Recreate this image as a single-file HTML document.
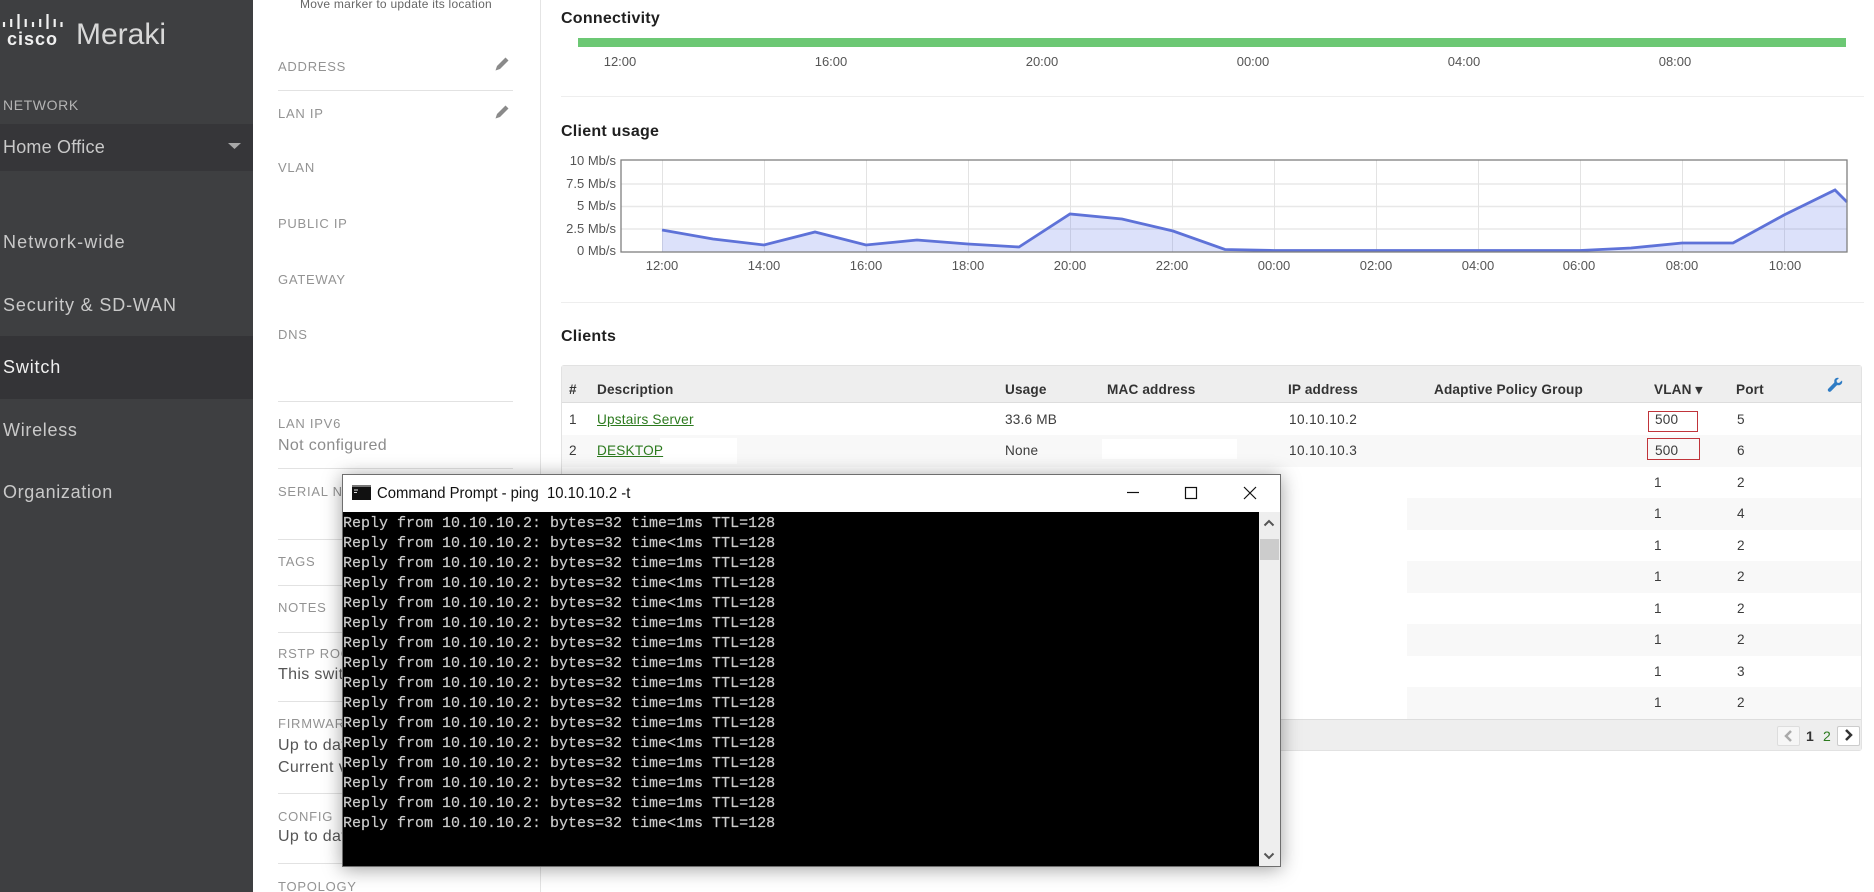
<!DOCTYPE html>
<html><head><meta charset="utf-8"><title>Meraki</title>
<style>
html,body{margin:0;padding:0;background:#fff;width:1874px;height:892px;overflow:hidden}
body{font-family:"Liberation Sans",sans-serif;position:relative}
.a{position:absolute;white-space:pre;line-height:20px}
.nav{left:3px;font-size:18px;letter-spacing:.85px;color:#c9c9c9}
.l{left:278px;font-size:13px;letter-spacing:.75px;color:#939393}
.v{left:278px;font-size:16px;letter-spacing:.35px;color:#7a7a7a}
.h{position:absolute;left:278px;width:235px;height:1px;background:#e2e2e2}
.s{left:561px;font-size:16px;font-weight:bold;color:#1f1f1f;letter-spacing:.25px}
.x{font-size:13px;color:#555;transform:translateX(-50%)}
.th{font-size:13.6px;font-weight:bold;color:#333;top:380px;letter-spacing:.15px}
.td{font-size:13.6px;color:#3c3c3c;letter-spacing:.2px}
.r{position:absolute;left:1407px;width:454px;background:#f8f8f8}
.b{position:absolute;background:#fff}
.g{position:absolute;border:1.5px solid #c0343a;box-sizing:border-box}
</style></head><body>

<!-- sidebar -->
<div style="position:absolute;left:0;top:0;width:253px;height:892px;background:#3e3f41"></div>
<div style="position:absolute;left:0;top:124px;width:253px;height:47px;background:#363639"></div>
<div style="position:absolute;left:0;top:336px;width:253px;height:63px;background:#343437"></div>
<svg style="position:absolute;left:0;top:0" width="70" height="34"><g stroke="#f0f0f0" stroke-width="2.200"><path d="M4 22v5M11.200 19v8M18.500 14v15M25.700 19v8M33 22v5M40.200 19v8M47.500 14v15M54.700 19v8M61.500 22v5"/></g></svg>
<div class="a" style="left:7px;top:29px;font-size:18px;font-weight:bold;letter-spacing:1px;color:#f0f0f0">cisco</div>
<div class="a" style="left:76px;top:18px;font-size:30px;line-height:34px;color:#d8d8d8">Meraki</div>
<div class="a" style="left:3px;top:95px;font-size:14px;letter-spacing:.6px;color:#b4b4b4">NETWORK</div>
<div class="a nav" style="top:137px;letter-spacing:.2px">Home Office</div>
<svg style="position:absolute;left:228px;top:143px" width="13" height="6"><path d="M0 0h13L6.500 6z" fill="#a8a8a8"/></svg>
<div class="a nav" style="top:232px;letter-spacing:1.150px">Network-wide</div>
<div class="a nav" style="top:295px">Security &amp; SD-WAN</div>
<div class="a nav" style="top:357px;color:#f0f0f0">Switch</div>
<div class="a nav" style="top:420px;letter-spacing:.7px">Wireless</div>
<div class="a nav" style="top:482px;letter-spacing:.65px">Organization</div>

<!-- detail column -->
<div style="position:absolute;left:540px;top:0;width:1px;height:892px;background:#e4e4e4"></div>
<div class="a" style="left:300px;top:-6px;font-size:12px;letter-spacing:.25px;color:#666">Move marker to update its location</div>
<div class="a l" style="top:57px">ADDRESS</div>
<svg style="position:absolute;left:495px;top:57px" width="14" height="14"><path d="M10.500 0.500l3 3-8.500 8.500-4.500 1.500 1.500-4.500z" fill="#8a8a8a"/></svg>
<div class="h" style="top:90px"></div>
<div class="a l" style="top:104px">LAN IP</div>
<svg style="position:absolute;left:495px;top:105px" width="14" height="14"><path d="M10.500 0.500l3 3-8.500 8.500-4.500 1.500 1.500-4.500z" fill="#8a8a8a"/></svg>
<div class="a l" style="top:158px">VLAN</div>
<div class="a l" style="top:214px">PUBLIC IP</div>
<div class="a l" style="top:270px">GATEWAY</div>
<div class="a l" style="top:325px">DNS</div>
<div class="h" style="top:401px"></div>
<div class="a l" style="top:414px">LAN IPV6</div>
<div class="a v" style="top:436px;color:#8c8c8c">Not configured</div>
<div class="h" style="top:468px"></div>
<div class="a l" style="top:482px">SERIAL NUMBER</div>
<div class="h" style="top:539px"></div>
<div class="a l" style="top:552px">TAGS</div>
<div class="h" style="top:585px"></div>
<div class="a l" style="top:598px">NOTES</div>
<div class="h" style="top:632px"></div>
<div class="a l" style="top:644px">RSTP ROOT</div>
<div class="a v" style="top:665px;color:#555">This switch</div>
<div class="h" style="top:701px"></div>
<div class="a l" style="top:714px">FIRMWARE</div>
<div class="a v" style="top:736px;color:#555">Up to date</div>
<div class="a v" style="top:758px;color:#555">Current version</div>
<div class="h" style="top:793px"></div>
<div class="a l" style="top:807px">CONFIG</div>
<div class="a v" style="top:827px;color:#555">Up to date</div>
<div class="h" style="top:863px"></div>
<div class="a l" style="top:877px">TOPOLOGY</div>

<!-- connectivity -->
<div class="a s" style="top:9px">Connectivity</div>
<div style="position:absolute;left:578px;top:38px;width:1268px;height:9px;background:#6cc874"></div>
<div class="a x" style="left:620px;top:52px">12:00</div>
<div class="a x" style="left:831px;top:52px">16:00</div>
<div class="a x" style="left:1042px;top:52px">20:00</div>
<div class="a x" style="left:1253px;top:52px">00:00</div>
<div class="a x" style="left:1464px;top:52px">04:00</div>
<div class="a x" style="left:1675px;top:52px">08:00</div>
<div style="position:absolute;left:561px;top:96px;width:1303px;height:1px;background:#eee"></div>

<!-- client usage -->
<div class="a s" style="top:122px">Client usage</div>
<svg style="position:absolute;left:0;top:0" width="1874" height="300">
<g stroke="#e8e8e8" stroke-width="1.500"><path d="M621 184H1847M621 206.500H1847M621 229H1847"/></g>
<g stroke="#e3e3e3" stroke-width="1"><path d="M662.500 160V252M764.500 160V252M866.500 160V252M968.500 160V252M1070.500 160V252M1172.500 160V252M1274.500 160V252M1376.500 160V252M1478.500 160V252M1580.500 160V252M1682.500 160V252M1784.500 160V252"/></g>
<polygon fill="#5f78e6" fill-opacity=".22" points="662,230 713,239 764,245 815,232 866,245 917,240 968,244 1019,247 1070,214 1122,219 1173,231 1225,249.500 1274,250.500 1580,250.500 1631,248 1682,243 1733,243 1784,215 1835,190 1847,202 1847,252 662,252"/>
<polyline fill="none" stroke="#5e72d8" stroke-width="2.800" points="662,230 713,239 764,245 815,232 866,245 917,240 968,244 1019,247 1070,214 1122,219 1173,231 1225,249.500 1274,250.500 1580,250.500 1631,248 1682,243 1733,243 1784,215 1835,190 1847,202"/>
<rect x="621" y="160" width="1226" height="92" fill="none" stroke="#808080" stroke-width="1.300"/>
</svg>
<div class="a" style="left:540px;width:76px;text-align:right;top:151px;font-size:13px;color:#555">10 Mb/s</div>
<div class="a" style="left:540px;width:76px;text-align:right;top:174px;font-size:13px;color:#555">7.5 Mb/s</div>
<div class="a" style="left:540px;width:76px;text-align:right;top:196px;font-size:13px;color:#555">5 Mb/s</div>
<div class="a" style="left:540px;width:76px;text-align:right;top:219px;font-size:13px;color:#555">2.5 Mb/s</div>
<div class="a" style="left:540px;width:76px;text-align:right;top:241px;font-size:13px;color:#555">0 Mb/s</div>
<div class="a x" style="left:662px;top:256px">12:00</div>
<div class="a x" style="left:764px;top:256px">14:00</div>
<div class="a x" style="left:866px;top:256px">16:00</div>
<div class="a x" style="left:968px;top:256px">18:00</div>
<div class="a x" style="left:1070px;top:256px">20:00</div>
<div class="a x" style="left:1172px;top:256px">22:00</div>
<div class="a x" style="left:1274px;top:256px">00:00</div>
<div class="a x" style="left:1376px;top:256px">02:00</div>
<div class="a x" style="left:1478px;top:256px">04:00</div>
<div class="a x" style="left:1579px;top:256px">06:00</div>
<div class="a x" style="left:1682px;top:256px">08:00</div>
<div class="a x" style="left:1785px;top:256px">10:00</div>
<div style="position:absolute;left:561px;top:302px;width:1303px;height:1px;background:#eee"></div>

<!-- clients -->
<div class="a s" style="top:327px">Clients</div>
<div style="position:absolute;left:561px;top:365px;width:1301px;height:386px;box-sizing:border-box;border:1px solid #e2e2e2;border-radius:3px"></div>
<div style="position:absolute;left:562px;top:366px;width:1299px;height:37px;background:#eee;border-bottom:1px solid #ddd;box-sizing:border-box"></div>
<div style="position:absolute;left:562px;top:435px;width:1299px;height:32px;background:#f8f8f8"></div>
<div class="r" style="top:498px;height:32px"></div>
<div class="r" style="top:561px;height:32px"></div>
<div class="r" style="top:624px;height:32px"></div>
<div class="r" style="top:687px;height:32px"></div>
<div style="position:absolute;left:562px;top:719px;width:1299px;height:31px;background:#eee;border-top:1px solid #ddd;box-sizing:border-box"></div>
<div class="b" style="left:660px;top:438px;width:77px;height:26px"></div>
<div class="b" style="left:1102px;top:439px;width:135px;height:20px"></div>

<div class="a th" style="left:569px">#</div>
<div class="a th" style="left:597px">Description</div>
<div class="a th" style="left:1005px">Usage</div>
<div class="a th" style="left:1107px">MAC address</div>
<div class="a th" style="left:1288px">IP address</div>
<div class="a th" style="left:1434px">Adaptive Policy Group</div>
<div class="a th" style="left:1654px">VLAN ▾</div>
<div class="a th" style="left:1736px">Port</div>
<svg style="position:absolute;left:1827px;top:377px" width="16" height="16" viewBox="0 0 16 16"><path d="M15 3.500l-3 2.500-2-.5-.5-2L12 1c-2.500-1-5 .8-4.700 3.500.1.600.1 1-.3 1.400L1.500 11.500c-1 1-.9 2.100-.2 2.800s1.800.8 2.800-.2L9.600 8.500c.4-.4.800-.4 1.400-.3C13.800 8.600 15.900 6 15 3.500z" fill="#2f7cc4"/></svg>

<div class="a td" style="left:569px;top:410px">1</div>
<div class="a td" style="left:597px;top:410px;color:#2c7a1e;text-decoration:underline">Upstairs Server</div>
<div class="a td" style="left:1005px;top:410px">33.6 MB</div>
<div class="a td" style="left:1289px;top:410px;letter-spacing:.4px">10.10.10.2</div>
<div class="a td" style="left:1655px;top:410px">500</div>
<div class="a td" style="left:1737px;top:410px">5</div>
<div class="g" style="left:1648px;top:411px;width:50px;height:21px"></div>

<div class="a td" style="left:569px;top:441px">2</div>
<div class="a td" style="left:597px;top:441px;color:#2c7a1e;text-decoration:underline">DESKTOP</div>
<div class="a td" style="left:1005px;top:441px">None</div>
<div class="a td" style="left:1289px;top:441px;letter-spacing:.4px">10.10.10.3</div>
<div class="a td" style="left:1655px;top:441px">500</div>
<div class="a td" style="left:1737px;top:441px">6</div>
<div class="g" style="left:1647px;top:438px;width:53px;height:22px"></div>

<div class="a td" style="left:1654px;top:473px">1</div><div class="a td" style="left:1737px;top:473px">2</div>
<div class="a td" style="left:1654px;top:504px">1</div><div class="a td" style="left:1737px;top:504px">4</div>
<div class="a td" style="left:1654px;top:536px">1</div><div class="a td" style="left:1737px;top:536px">2</div>
<div class="a td" style="left:1654px;top:567px">1</div><div class="a td" style="left:1737px;top:567px">2</div>
<div class="a td" style="left:1654px;top:599px">1</div><div class="a td" style="left:1737px;top:599px">2</div>
<div class="a td" style="left:1654px;top:630px">1</div><div class="a td" style="left:1737px;top:630px">2</div>
<div class="a td" style="left:1654px;top:662px">1</div><div class="a td" style="left:1737px;top:662px">3</div>
<div class="a td" style="left:1654px;top:693px">1</div><div class="a td" style="left:1737px;top:693px">2</div>

<!-- pager -->
<div style="position:absolute;left:1777px;top:726px;width:23px;height:20px;background:#f6f6f6;border:1px solid #ddd;box-sizing:border-box;border-radius:2px"></div>
<svg style="position:absolute;left:1784px;top:730px" width="9" height="12"><path d="M7 1L2 6l5 5" fill="none" stroke="#aaa" stroke-width="2.500"/></svg>
<div class="a" style="left:1806px;top:726px;font-size:14px;font-weight:bold;color:#333">1</div>
<div class="a" style="left:1823px;top:726px;font-size:14px;color:#2c7a1e">2</div>
<div style="position:absolute;left:1837px;top:726px;width:23px;height:20px;background:#fff;border:1px solid #ccc;box-sizing:border-box;border-radius:2px"></div>
<svg style="position:absolute;left:1844px;top:729px" width="9" height="12"><path d="M2 1l5 5-5 5" fill="none" stroke="#333" stroke-width="2.500"/></svg>

<!-- command prompt -->
<div style="position:absolute;left:342px;top:474px;width:939px;height:393px;box-sizing:border-box;border:1px solid #6e6e6e;background:#fff;box-shadow:0 2px 18px rgba(0,0,0,.38)"></div>
<div style="position:absolute;left:343px;top:512px;width:916px;height:354px;background:#000"></div>
<div style="position:absolute;left:1259px;top:512px;width:21px;height:354px;background:#eee"></div>
<div style="position:absolute;left:1260px;top:539px;width:19px;height:21px;background:#ccc"></div>
<svg style="position:absolute;left:1263px;top:518px" width="12" height="10"><path d="M1.500 7.500L6 3l4.500 4.500" fill="none" stroke="#555" stroke-width="2"/></svg>
<svg style="position:absolute;left:1263px;top:851px" width="12" height="10"><path d="M1.500 2.500L6 7l4.500-4.500" fill="none" stroke="#555" stroke-width="2"/></svg>
<svg style="position:absolute;left:352px;top:485px" width="19" height="15"><rect width="19" height="15" fill="#111"/><rect width="19" height="2" fill="#777"/><path d="M2 5h4M2 7.500h3" stroke="#ddd" stroke-width="1"/></svg>
<div class="a" style="left:377px;top:484px;font-size:16px;color:#111;transform:scaleX(.928);transform-origin:0 0">Command Prompt - ping  10.10.10.2 -t</div>
<svg style="position:absolute;left:1120px;top:480px" width="145" height="26"><g fill="none" stroke="#111" stroke-width="1.200"><path d="M7 12.500h12"/><rect x="65.500" y="7.500" width="11" height="11"/><path d="M124 7l12 12M136 7l-12 12"/></g></svg>
<pre style="position:absolute;left:343px;top:514px;margin:0;font:15px/20px 'Liberation Mono',monospace;color:#ccc;-webkit-text-stroke:.2px #ccc">Reply from 10.10.10.2: bytes=32 time=1ms TTL=128
Reply from 10.10.10.2: bytes=32 time&lt;1ms TTL=128
Reply from 10.10.10.2: bytes=32 time=1ms TTL=128
Reply from 10.10.10.2: bytes=32 time&lt;1ms TTL=128
Reply from 10.10.10.2: bytes=32 time&lt;1ms TTL=128
Reply from 10.10.10.2: bytes=32 time=1ms TTL=128
Reply from 10.10.10.2: bytes=32 time=1ms TTL=128
Reply from 10.10.10.2: bytes=32 time=1ms TTL=128
Reply from 10.10.10.2: bytes=32 time=1ms TTL=128
Reply from 10.10.10.2: bytes=32 time=1ms TTL=128
Reply from 10.10.10.2: bytes=32 time=1ms TTL=128
Reply from 10.10.10.2: bytes=32 time&lt;1ms TTL=128
Reply from 10.10.10.2: bytes=32 time=1ms TTL=128
Reply from 10.10.10.2: bytes=32 time=1ms TTL=128
Reply from 10.10.10.2: bytes=32 time=1ms TTL=128
Reply from 10.10.10.2: bytes=32 time&lt;1ms TTL=128</pre>
</body></html>
